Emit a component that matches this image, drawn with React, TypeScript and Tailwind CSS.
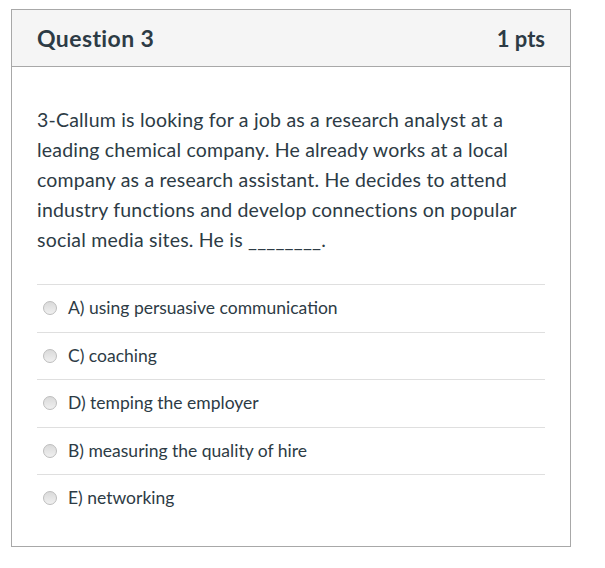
const options = [
  "A) using persuasive communication",
  "C) coaching",
  "D) temping the employer",
  "B) measuring the quality of hire",
  "E) networking",
]

function Radio() {
  return (
    <span className="flex h-[14px] w-[14px] shrink-0 items-center justify-center rounded-full border border-[#bdbdbd] bg-gradient-to-b from-[#dadada] to-[#f0f0f0]" />
  )
}

export default function App() {
  return (
    <div className="min-h-screen bg-white pl-[11px] pt-[9px] text-[#2d3b45]" style={{ fontFamily: "Lato, 'Open Sans', sans-serif" }}>
      <div className="w-[560px] border border-[#a8a8a8]">
        <div className="flex h-[57px] items-center justify-between border-b border-[#a8a8a8] bg-[#f5f5f5] px-[25px]">
          <h2 className="text-[23px] font-bold tracking-[0.4px]">Question 3</h2>
          <span className="text-[22px] font-bold">1 pts</span>
        </div>
        <div className="px-[25px] pb-[24px] pt-[38px]">
          <p className="text-[19.5px] leading-[30px] tracking-[0.2px]">
            3-Callum is looking for a job as a research analyst at a leading chemical company. He already works at a local company as a research assistant. He decides to attend industry functions and develop connections on popular social media sites. He is ________.
          </p>
          <div className="mt-[29px]">
            {options.map((o) => (
              <div key={o} className="flex h-[47.5px] items-center gap-[11px] border-t border-[#dfdfdf] pl-[6px]">
                <Radio />
                <span className="text-[17.5px]">{o}</span>
              </div>
            ))}
          </div>
        </div>
      </div>
    </div>
  )
}
